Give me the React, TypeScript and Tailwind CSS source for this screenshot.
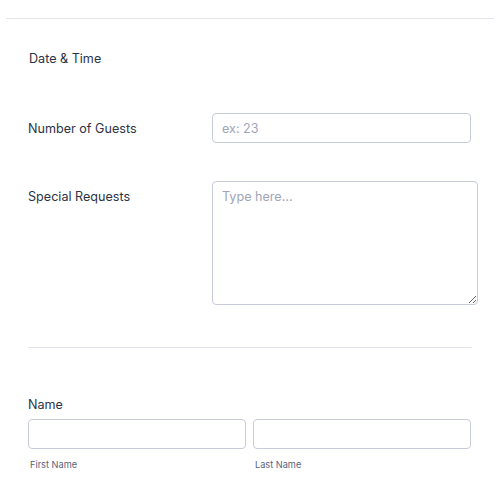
export default function App() {
  return (
    <div
      className="w-[500px] h-[484px] overflow-hidden bg-white text-[#2c3345]"
      style={{ fontFamily: 'Inter, "Liberation Sans", sans-serif' }}
    >
      <div className="h-[18px]" />
      <div className="mx-[6px] border-t border-[#e3e5ec]" />

      {/* Date & Time */}
      <div className="mt-[30px] pl-[29px] text-[12.6px] leading-[20px]">Date &amp; Time</div>

      {/* Number of Guests */}
      <div className="mt-[44px] flex items-center px-[28px]">
        <label className="w-[184px] shrink-0 pt-[2px] text-[12.6px] leading-[20px]">Number of Guests</label>
        <input
          type="text"
          placeholder="ex: 23"
          className="h-[30px] w-[259px] shrink-0 rounded-[4px] border border-[#c8cbd8] px-[9px] text-[12.6px] placeholder:text-[#a0a5b8] outline-none"
        />
      </div>

      {/* Special Requests */}
      <div className="mt-[38px] flex items-start px-[28px]">
        <label className="w-[184px] shrink-0 pt-[7px] text-[12.6px] leading-[18px]">Special Requests</label>
        <textarea
          placeholder="Type here..."
          className="h-[124px] w-[266px] shrink-0 rounded-[4px] border border-[#c8cbd8] px-[9px] py-[6px] text-[12.6px] leading-[18px] placeholder:text-[#a0a5b8] outline-none"
        />
      </div>

      <div className="mx-[28px] mt-[42px] w-[444px] border-t border-[#e3e5ec]" />

      {/* Name */}
      <div className="mt-[47px] px-[28px]">
        <div className="text-[12.6px] leading-[20px]">Name</div>
        <div className="mt-[4px] flex gap-[7px]">
          <div className="w-[218px]">
            <input
              type="text"
              className="h-[30px] w-full rounded-[4px] border border-[#c8cbd8] px-[9px] text-[12.6px] outline-none"
            />
            <div className="mt-[9px] pl-[2px] text-[9.2px] leading-[14px] text-[#57647e]">First Name</div>
          </div>
          <div className="w-[218px]">
            <input
              type="text"
              className="h-[30px] w-full rounded-[4px] border border-[#c8cbd8] px-[9px] text-[12.6px] outline-none"
            />
            <div className="mt-[9px] pl-[2px] text-[9.2px] leading-[14px] text-[#57647e]">Last Name</div>
          </div>
        </div>
      </div>
    </div>
  );
}
